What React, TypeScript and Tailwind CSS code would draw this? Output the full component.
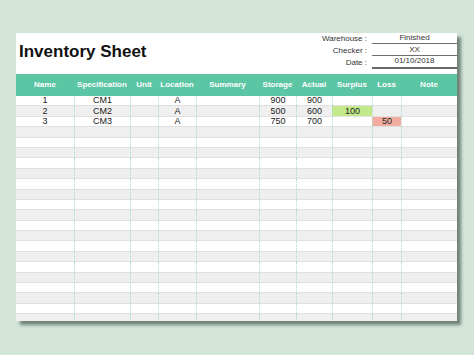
import React from "react";

const cols = ["Name", "Specification", "Unit", "Location", "Summary", "Storage", "Actual", "Surplus", "Loss", "Note"];

type Cell = { v: string; bg?: string };

const data: Cell[][] = [
  [{ v: "1" }, { v: "CM1" }, { v: "" }, { v: "A" }, { v: "" }, { v: "900" }, { v: "900" }, { v: "" }, { v: "" }, { v: "" }],
  [{ v: "2" }, { v: "CM2" }, { v: "" }, { v: "A" }, { v: "" }, { v: "500" }, { v: "600" }, { v: "100", bg: "bg-[#c4e98b]" }, { v: "" }, { v: "" }],
  [{ v: "3" }, { v: "CM3" }, { v: "" }, { v: "A" }, { v: "" }, { v: "750" }, { v: "700" }, { v: "" }, { v: "50", bg: "bg-[#f3ada0]" }, { v: "" }],
];

const rows: Cell[][] = Array.from({ length: 22 }, (_, i) =>
  data[i] ?? Array.from({ length: 10 }, () => ({ v: "" }))
);

const grid = "grid grid-cols-[58px_56px_28px_38px_63px_37px_36px_40px_29px_56px]";

export default function App() {
  return (
    <div
      className="w-[474px] h-[355px] bg-[#d3e5d9] pt-[33px] pl-[16px] overflow-hidden"
      style={{ fontFamily: '"Liberation Sans", Arial, sans-serif' }}
    >
      <div className="w-[441px] h-[288px] bg-white shadow-[4px_4px_3px_rgba(60,80,70,0.65)] flex flex-col">
        <div className="h-[41px] flex justify-between">
          <div className="pl-[3px] pt-[10px] text-[17px] font-bold text-[#111] leading-none">
            Inventory Sheet
          </div>
          <div className="flex flex-col text-[8px] text-[#333] leading-none">
            <div className="flex h-[11px] items-end">
              <div className="w-[80px] text-right pr-[5px] pb-[1px]">Warehouse :</div>
              <div className="w-[85px] text-center border-b-[1.5px] border-[#6f6f6f] h-[11px] flex items-end justify-center pb-[1px]">Finished</div>
            </div>
            <div className="flex h-[12px] items-end">
              <div className="w-[80px] text-right pr-[5px] pb-[1px]">Checker :</div>
              <div className="w-[85px] text-center border-b-[1.5px] border-[#6f6f6f] h-[12px] flex items-end justify-center pb-[1px]">XX</div>
            </div>
            <div className="flex h-[13px] items-end">
              <div className="w-[80px] text-right pr-[5px] pb-[2px]">Date :</div>
              <div className="w-[85px] text-center border-b-2 border-[#666] h-[13px] flex items-end justify-center pb-[2px]">01/10/2018</div>
            </div>
          </div>
        </div>
        <div className={`${grid} h-[22px] bg-[#5cc5a4] text-white text-[8px] font-bold`}>
          {cols.map((c) => (
            <div key={c} className="flex items-center justify-center">
              {c}
            </div>
          ))}
        </div>
        <div className="flex-1 overflow-hidden">
          {rows.map((r, i) => (
            <div
              key={i}
              className={`${grid} h-[10.4px] border-b border-[#e0e0e0] ${i % 2 === 1 ? "bg-[#efefef]" : "bg-white"}`}
            >
              {r.map((c, j) => (
                <div
                  key={j}
                  className={`flex items-center justify-center text-[9px] text-[#222] leading-none ${
                    j > 0 ? "border-l border-dotted border-[#a8dccb]" : ""
                  } ${c.bg ?? ""}`}
                >
                  {c.v}
                </div>
              ))}
            </div>
          ))}
        </div>
      </div>
    </div>
  );
}
